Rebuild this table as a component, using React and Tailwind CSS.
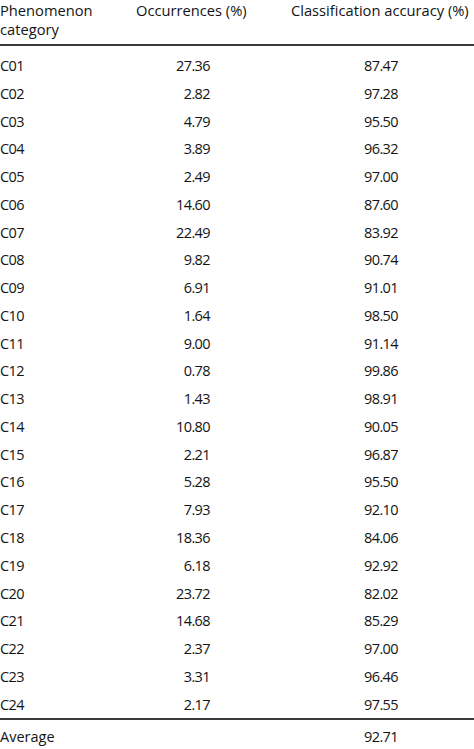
const rows = [
  ['C01', '27.36', '87.47'],
  ['C02', '2.82', '97.28'],
  ['C03', '4.79', '95.50'],
  ['C04', '3.89', '96.32'],
  ['C05', '2.49', '97.00'],
  ['C06', '14.60', '87.60'],
  ['C07', '22.49', '83.92'],
  ['C08', '9.82', '90.74'],
  ['C09', '6.91', '91.01'],
  ['C10', '1.64', '98.50'],
  ['C11', '9.00', '91.14'],
  ['C12', '0.78', '99.86'],
  ['C13', '1.43', '98.91'],
  ['C14', '10.80', '90.05'],
  ['C15', '2.21', '96.87'],
  ['C16', '5.28', '95.50'],
  ['C17', '7.93', '92.10'],
  ['C18', '18.36', '84.06'],
  ['C19', '6.18', '92.92'],
  ['C20', '23.72', '82.02'],
  ['C21', '14.68', '85.29'],
  ['C22', '2.37', '97.00'],
  ['C23', '3.31', '96.46'],
  ['C24', '2.17', '97.55'],
];

export default function App() {
  return (
    <div className="h-[749px] w-[474px] overflow-hidden bg-white text-[14.5px] tracking-[-0.6px] text-[#141414] [font-family:'Open_Sans',sans-serif]">
      <div className="grid h-[44px] grid-cols-[136px_155px_183px] pt-[1px] text-[14.7px] leading-[19px] tracking-normal">
        <div className="whitespace-nowrap">
          Phenomenon
          <br />
          category
        </div>
        <div className="whitespace-nowrap">Occurrences (%)</div>
        <div className="whitespace-nowrap">Classification accuracy (%)</div>
      </div>
      <div className="h-[2px] bg-[#3a3a3a]" />
      <div className="pt-[6px]">
        {rows.map((r) => (
          <div key={r[0]} className="grid h-[27.78px] grid-cols-[136px_155px_183px] items-center">
            <div>{r[0]}</div>
            <div className="pr-[81px] text-right">{r[1]}</div>
            <div className="pr-[76px] text-right">{r[2]}</div>
          </div>
        ))}
      </div>
      <div className="h-[2px] bg-[#3a3a3a]" />
      <div className="grid h-[28px] grid-cols-[136px_155px_183px] items-center pt-[5px]">
        <div className="tracking-normal">Average</div>
        <div />
        <div className="pr-[76px] text-right">92.71</div>
      </div>
    </div>
  );
}
